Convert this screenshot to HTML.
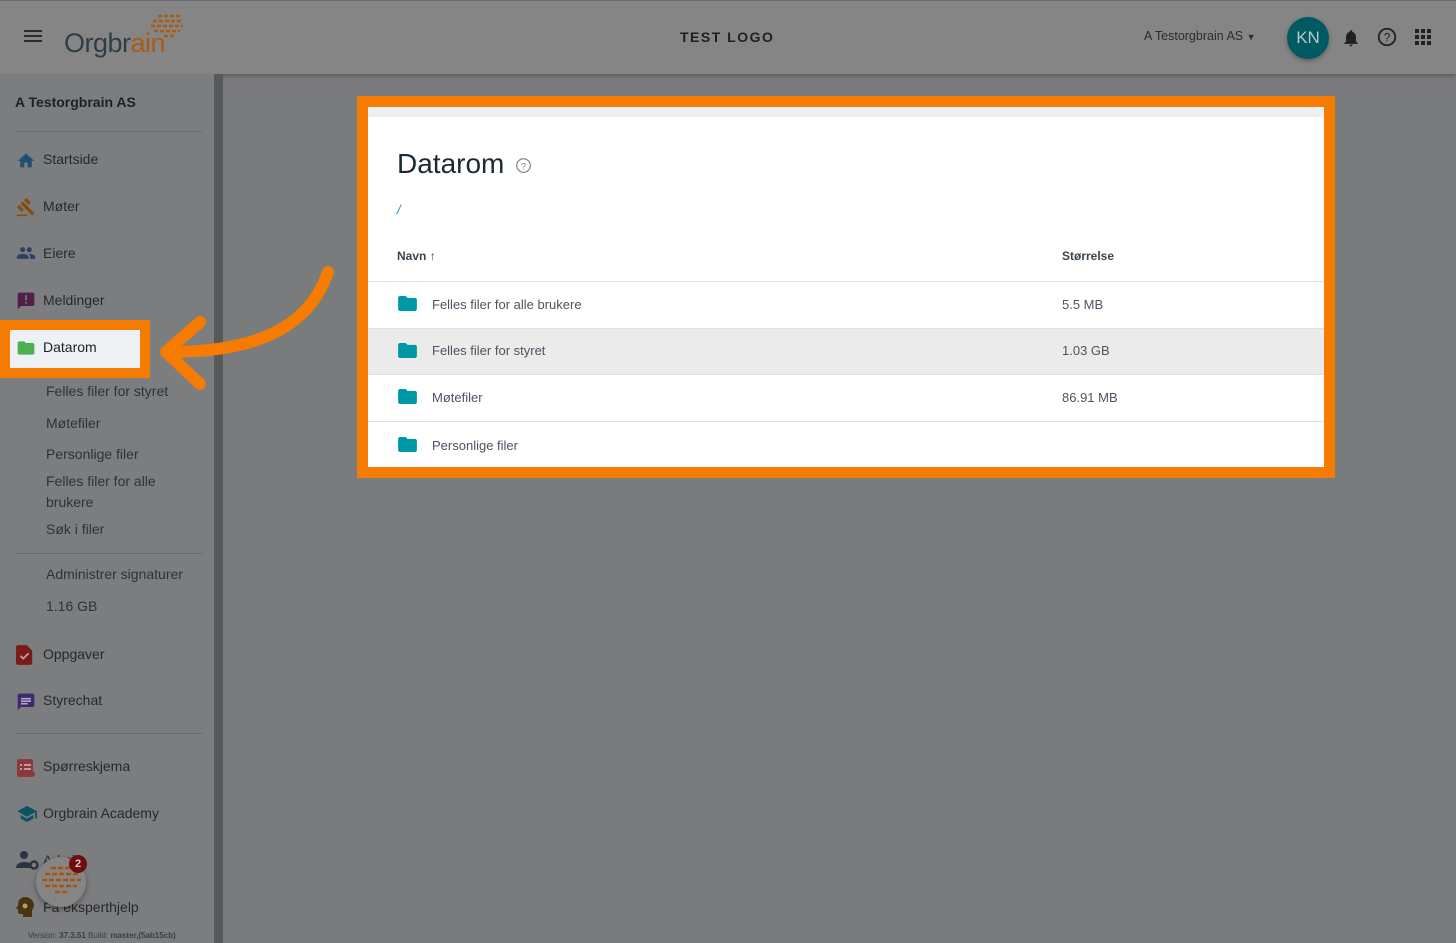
<!DOCTYPE html>
<html><head><meta charset="utf-8"><style>
*{box-sizing:border-box;margin:0;padding:0}
body{width:1456px;height:943px;overflow:hidden;background:#7a7b7c;font-family:"Liberation Sans",sans-serif;position:relative;color:#262a2e}
.hdr{position:absolute;left:0;top:0;width:1456px;height:74px;background:#858586;box-shadow:0 2px 4px rgba(0,0,0,.25);border-top:1px solid #6a6a6a}
.side{position:absolute;left:0;top:74px;width:214px;height:869px;background:#7c7d7f}
.sb{position:absolute;left:214px;top:74px;width:9px;height:869px;background:#58595a}
.it{position:absolute;left:43px;font-size:14px;color:#26292c}
.sub{position:absolute;left:46px;font-size:14px;color:#2f3336;line-height:21px}
.ic{position:absolute;left:16px}
.hr{position:absolute;left:16px;width:186px;height:1px;background:#686a6c}
.card{position:absolute;left:357px;top:96px;width:978px;height:382px;border:11px solid #f57c00;background:#fff}
.row{position:absolute;left:0;width:956px;border-top:1px solid #e0e0e0;font-size:13px;color:#4a5560}
.row span{position:absolute;top:0}
</style></head><body>
<div class="hdr">
 <div style="position:absolute;left:24px;top:29px;width:18px;height:2px;background:#2a2d30;box-shadow:0 5px 0 #2a2d30,0 10px 0 #2a2d30"></div>
 <div style="position:absolute;left:64px;top:27px;font-size:27px;color:#2f3e46;letter-spacing:-.5px">Orgbr<span style="color:#a85c12">ain</span></div>
 <svg style="position:absolute;left:150px;top:12px" width="34" height="28"><g stroke="#a85c12" stroke-width="2.5" stroke-dasharray="4 2"><line x1="8" y1="3" x2="30" y2="3"/><line x1="3" y1="8" x2="33" y2="8"/><line x1="1" y1="13" x2="33" y2="13"/><line x1="4" y1="18" x2="30" y2="18"/><line x1="14" y1="23" x2="24" y2="23"/></g></svg>
 <div style="position:absolute;left:680px;top:28px;font-size:14px;font-weight:bold;letter-spacing:1.5px;color:#1d1f21">TEST LOGO</div>
 <div style="position:absolute;left:1144px;top:28px;font-size:12.5px;color:#2a2d30">A Testorgbrain AS <span style="font-size:9px">▼</span></div>
 <div style="position:absolute;left:1287px;top:16px;width:42px;height:42px;border-radius:50%;background:#005a61;color:#b9c9cb;font-size:17px;text-align:center;line-height:42px;box-shadow:0 2px 4px rgba(0,0,0,.3)">KN</div>
 <svg style="position:absolute;left:1341px;top:26px" width="20" height="22" viewBox="0 0 24 24"><path fill="#1f2225" d="M12 22c1.1 0 2-.9 2-2h-4c0 1.1.9 2 2 2zm6-6v-5c0-3.07-1.64-5.64-4.5-6.32V4c0-.83-.67-1.5-1.5-1.5s-1.5.67-1.5 1.5v.68C7.63 5.36 6 7.92 6 11v5l-2 2v1h16v-1l-2-2z"/></svg>
 <svg style="position:absolute;left:1376px;top:25px" width="22" height="22" viewBox="0 0 24 24"><circle cx="12" cy="12" r="9" fill="none" stroke="#1f2225" stroke-width="2"/><text x="12" y="17" font-size="13" text-anchor="middle" fill="#1f2225" font-family="Liberation Sans">?</text></svg>
 <svg style="position:absolute;left:1415px;top:28px" width="16" height="16"><g fill="#1f2225"><rect x="0" y="0" width="4" height="4"/><rect x="6" y="0" width="4" height="4"/><rect x="12" y="0" width="4" height="4"/><rect x="0" y="6" width="4" height="4"/><rect x="6" y="6" width="4" height="4"/><rect x="12" y="6" width="4" height="4"/><rect x="0" y="12" width="4" height="4"/><rect x="6" y="12" width="4" height="4"/><rect x="12" y="12" width="4" height="4"/></g></svg>
</div>
<div class="side"></div><div class="sb"></div>
<div style="position:absolute;left:15px;top:94px;font-size:14px;font-weight:bold;color:#1f2225">A Testorgbrain AS</div>
<div class="hr" style="top:131px"></div>
<svg class="ic" style="top:151px" width="20" height="18" viewBox="0 0 24 22"><path fill="#1f4f72" d="M10 20v-6h4v6h5v-8h3L12 3 2 12h3v8z"/></svg><div class="it" style="top:151px">Startside</div>
<svg class="ic" style="top:197px" width="20" height="20" viewBox="0 0 24 24"><path fill="#8a4a0c" d="M1 21h12v2H1zM5.24 8.07l2.83-2.83 14.14 14.14-2.83 2.83zM12.32 1l5.66 5.66-2.83 2.83-5.66-5.66zM3.83 9.48l5.66 5.66-2.83 2.83L1 12.31z"/></svg><div class="it" style="top:198px">Møter</div>
<svg class="ic" style="top:245px" width="20" height="16" viewBox="0 0 24 18"><path fill="#2e3f6b" d="M16 8c1.66 0 2.99-1.34 2.99-3S17.66 2 16 2c-1.66 0-3 1.34-3 3s1.34 3 3 3zm-8 0c1.66 0 2.99-1.34 2.99-3S9.66 2 8 2C6.34 2 5 3.34 5 5s1.34 3 3 3zm0 2c-2.33 0-7 1.17-7 3.5V16h14v-2.5C15 11.17 10.33 10 8 10zm8 0c-.29 0-.62.02-.97.05 1.16.84 1.97 1.97 1.97 3.45V16h6v-2.5c0-2.33-4.67-3.5-7-3.5z"/></svg><div class="it" style="top:245px">Eiere</div>
<svg class="ic" style="top:291px" width="20" height="20" viewBox="0 0 24 24"><path fill="#4f2048" d="M20 2H4c-1.1 0-2 .9-2 2v18l4-4h14c1.1 0 2-.9 2-2V4c0-1.1-.9-2-2-2zm-7 9h-2V5h2v6zm0 4h-2v-2h2v2z"/></svg><div class="it" style="top:292px">Meldinger</div>
<div style="position:absolute;left:0;top:320px;width:150px;height:58px;background:#f57c00"></div>
<div style="position:absolute;left:10px;top:330px;width:130px;height:38px;background:#eef1f4"></div>
<svg class="ic" style="top:339px" width="20" height="18" viewBox="0 0 24 20"><path fill="#4caf50" d="M10 2H4c-1.1 0-2 .9-2 2v12c0 1.1.9 2 2 2h16c1.1 0 2-.9 2-2V6c0-1.1-.9-2-2-2h-8l-2-2z"/></svg><div class="it" style="top:339px;color:#1d2124">Datarom</div>
<div class="sub" style="top:381px">Felles filer for styret</div>
<div class="sub" style="top:413px">Møtefiler</div>
<div class="sub" style="top:444px">Personlige filer</div>
<div class="sub" style="top:471px">Felles filer for alle<br>brukere</div>
<div class="sub" style="top:519px">Søk i filer</div>
<div class="hr" style="top:553px"></div>
<div class="sub" style="top:564px">Administrer signaturer</div>
<div class="sub" style="top:596px">1.16 GB</div>
<svg class="ic" style="top:645px" width="18" height="20" viewBox="0 0 20 22"><path fill="#7a1a1a" d="M2 0h10l6 6v14c0 1-1 2-2 2H2c-1 0-2-1-2-2V2c0-1 1-2 2-2z"/><path d="M5 12l3 3 6-6" stroke="#c49a9a" stroke-width="2" fill="none"/></svg><div class="it" style="top:646px">Oppgaver</div>
<svg class="ic" style="top:692px" width="20" height="20" viewBox="0 0 24 24"><path fill="#3e2a6e" d="M20 2H4c-1.1 0-2 .9-2 2v18l4-4h14c1.1 0 2-.9 2-2V4c0-1.1-.9-2-2-2z"/><path fill="#b0a7c6" d="M6 7h12v2H6zm0 3h12v2H6zm0 3h8v2H6z"/></svg><div class="it" style="top:692px">Styrechat</div>
<div class="hr" style="top:733px"></div>
<svg class="ic" style="top:756px" width="20" height="22" viewBox="0 0 20 22"><rect x="1" y="3" width="16" height="18" rx="2" fill="#8a3a3a"/><g fill="#c79a9a"><rect x="4" y="8" width="2" height="2"/><rect x="8" y="8" width="7" height="2"/><rect x="4" y="12" width="2" height="2"/><rect x="8" y="12" width="7" height="2"/></g><circle cx="16" cy="18" r="3" fill="#8a3a3a"/></svg><div class="it" style="top:758px">Spørreskjema</div>
<svg class="ic" style="top:805px" width="22" height="18" viewBox="0 0 24 20"><path fill="#0c5560" d="M12 1L1 7l11 6 9-4.91V15h2V7L12 1zM5 11.18v4L12 19l7-3.82v-4L12 15l-7-3.82z"/></svg><div class="it" style="top:805px">Orgbrain Academy</div>
<svg class="ic" style="top:850px" width="24" height="20" viewBox="0 0 24 20"><circle cx="8" cy="5" r="4" fill="#2a3440"/><path fill="#2a3440" d="M0 18c0-4 4-6 8-6s6 1 7 2v4z"/><circle cx="18" cy="15" r="3.5" fill="none" stroke="#2a3440" stroke-width="2.5"/></svg><div class="it" style="top:852px">Admin</div>
<svg class="ic" style="top:897px" width="20" height="22" viewBox="0 0 20 22"><path fill="#4a3310" d="M9 0c5 0 9 3.5 9 8.5 0 2-1 3.5-2 4.5v7H7v-3H4c-1 0-2-1-2-2v-3H0l2-4C2 3 5 0 9 0z"/><circle cx="9" cy="9" r="2.5" fill="#b59a6a"/></svg><div class="it" style="top:899px">Få eksperthjelp</div>
<div style="position:absolute;left:36px;top:857px;width:50px;height:50px;border-radius:50%;background:#858585;box-shadow:0 2px 6px rgba(0,0,0,.35)"></div>
<svg style="position:absolute;left:39px;top:864px" width="44" height="36"><g stroke="#a8520e" stroke-width="2.5" stroke-dasharray="5 2"><line x1="12" y1="4" x2="36" y2="4"/><line x1="6" y1="10" x2="40" y2="10"/><line x1="3" y1="16" x2="42" y2="16"/><line x1="6" y1="22" x2="38" y2="22"/><line x1="16" y1="28" x2="30" y2="28"/></g></svg>
<div style="position:absolute;left:69px;top:855px;width:18px;height:18px;border-radius:50%;background:#6d0d0d;color:#d8c8c8;font-size:11px;font-weight:bold;text-align:center;line-height:18px">2</div>
<div style="position:absolute;left:28px;top:931px;font-size:8px;color:#3a3d40">Version: <b>37.3.51</b> Build: <b>master,(5ab15cb)</b></div>

<svg style="position:absolute;left:150px;top:260px" width="200" height="140"><path d="M178 12 C160 65 110 92 20 92" stroke="#f57c00" stroke-width="12" fill="none" stroke-linecap="round"/><path d="M50 62 L16 92 L50 124" stroke="#f57c00" stroke-width="12" fill="none" stroke-linecap="round" stroke-linejoin="round"/></svg>

<div class="card">
 <div style="position:absolute;left:0;top:0;width:956px;height:10px;background:#edf0f2"></div>
 <div style="position:absolute;left:29px;top:41px;font-size:28px;color:#1a2a33">Datarom</div>
 <svg style="position:absolute;left:147px;top:50px" width="17" height="17" viewBox="0 0 20 20"><circle cx="10" cy="10" r="8" fill="none" stroke="#888" stroke-width="1.5"/><text x="10" y="14.5" font-size="11" text-anchor="middle" fill="#888" font-family="Liberation Sans">?</text></svg>
 <div style="position:absolute;left:29px;top:95px;font-size:13px;color:#1a8bb0;font-style:italic">/</div>
 <div style="position:absolute;left:29px;top:142px;font-size:12px;color:#3a4650;font-weight:bold">Navn <span style="font-size:12px">↑</span></div>
 <div style="position:absolute;left:694px;top:142px;font-size:12px;color:#3a4650;font-weight:bold">Størrelse</div>
 <div class="row" style="top:174px;height:47px"><svg style="position:absolute;left:30px;top:14px" width="19" height="15" viewBox="0 0 20 16"><path fill="#0097a7" d="M8 0H2C1 0 0 1 0 2v12c0 1 1 2 2 2h16c1 0 2-1 2-2V4c0-1-1-2-2-2h-8z"/></svg><span style="left:64px;top:15px">Felles filer for alle brukere</span><span style="left:694px;top:15px">5.5 MB</span></div>
 <div class="row" style="top:221px;height:47px;background:#ebebeb"><svg style="position:absolute;left:30px;top:14px" width="19" height="15" viewBox="0 0 20 16"><path fill="#0097a7" d="M8 0H2C1 0 0 1 0 2v12c0 1 1 2 2 2h16c1 0 2-1 2-2V4c0-1-1-2-2-2h-8z"/></svg><span style="left:64px;top:14px">Felles filer for styret</span><span style="left:694px;top:14px">1.03 GB</span></div>
 <div class="row" style="top:267px;height:47px"><svg style="position:absolute;left:30px;top:14px" width="19" height="15" viewBox="0 0 20 16"><path fill="#0097a7" d="M8 0H2C1 0 0 1 0 2v12c0 1 1 2 2 2h16c1 0 2-1 2-2V4c0-1-1-2-2-2h-8z"/></svg><span style="left:64px;top:15px">Møtefiler</span><span style="left:694px;top:15px">86.91 MB</span></div>
 <div class="row" style="top:314px;height:47px"><svg style="position:absolute;left:30px;top:15px" width="19" height="15" viewBox="0 0 20 16"><path fill="#0097a7" d="M8 0H2C1 0 0 1 0 2v12c0 1 1 2 2 2h16c1 0 2-1 2-2V4c0-1-1-2-2-2h-8z"/></svg><span style="left:64px;top:16px">Personlige filer</span></div>
</div>
</body></html>
